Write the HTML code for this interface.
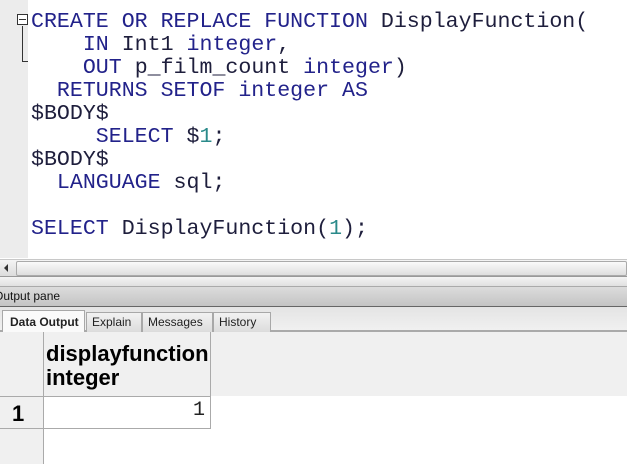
<!DOCTYPE html>
<html><head><style>
*{margin:0;padding:0;box-sizing:border-box}
body{width:627px;height:464px;overflow:hidden;background:#fff;position:relative;font-family:"Liberation Sans",sans-serif}
.gut{position:absolute;left:0;top:0;width:28px;height:258px;background:#ececec}
.code{position:absolute;left:31px;top:11px;font-family:"Liberation Mono",monospace;font-size:21.6px;line-height:23px;white-space:pre;color:#1e1e3c}
.k{color:#22228a}.n{color:#2a8a8a}
.fold{position:absolute;left:17px;top:14px;width:11px;height:11px;border:1px solid #333;background:#fff}
.fold:after{content:"";position:absolute;left:1px;top:4px;width:7px;height:1px;background:#333}
.fl{position:absolute;left:22px;top:26px;width:1px;height:36px;background:#333}
.fl2{position:absolute;left:22px;top:61px;width:6px;height:1px;background:#333}
.sb{position:absolute;left:0;top:259px;width:627px;height:18px;background:linear-gradient(#f4f4f4,#dcdcdc);border-top:1px solid #c8c8c8;border-bottom:1px solid #999}
.thumb{position:absolute;left:16px;top:1px;right:0;height:15px;border:1px solid #aaa;border-radius:2px;background:linear-gradient(#fafafa,#dedede)}
.arr{position:absolute;left:4px;top:4px;width:0;height:0;border-top:4px solid transparent;border-bottom:4px solid transparent;border-right:4px solid #333}
.sep{position:absolute;left:0;top:277px;width:627px;height:10px;background:linear-gradient(#f4f4f4,#e0e0e0);border-bottom:1px solid #aaa}
.op{position:absolute;left:0;top:287px;width:627px;height:20px;background:linear-gradient(#dcdcdc,#c4c4c4);border-bottom:1px solid #666;font-size:12px;line-height:18px;text-indent:-6px;color:#111}
.ts{position:absolute;left:0;top:307px;width:627px;height:25px;background:linear-gradient(#e4e4e4,#f0f0f0);border-bottom:2px solid #aaa}
.tab{position:absolute;top:5px;height:20px;border:1px solid #a8a8a8;border-bottom:none;background:linear-gradient(#f2f2f2,#dcdcdc);font-size:12px;line-height:18px;padding-left:5px;color:#222}
.tab.a{background:#fafafa;font-weight:bold;top:3px;height:22px;line-height:22px;padding-left:7px}
.grid{position:absolute;left:0;top:332px;width:627px;height:64px;background:#f0f0f0}
.rh{position:absolute;left:0;top:332px;width:44px;height:132px;background:#f0f0f0;border-right:1px solid #aaa}
.ch{position:absolute;left:44px;top:332px;width:167px;height:65px;border-right:1px solid #aaa;border-bottom:1px solid #aaa;font-weight:bold;font-size:22px;line-height:24px;padding:10px 0 0 2px;color:#000;white-space:nowrap}
.rn{position:absolute;left:0;top:396px;width:44px;height:33px;border-top:1px solid #aaa;border-bottom:1px solid #aaa;font-weight:bold;font-size:22px;line-height:34px;padding-left:12px}
.cell{position:absolute;left:44px;top:397px;width:167px;height:32px;border-right:1px solid #aaa;border-bottom:1px solid #aaa;background:#fff;font-family:"Liberation Mono",monospace;font-size:20px;text-align:right;padding-right:5px;line-height:28px;color:#222}
</style></head><body>
<div class="gut"></div>
<div class="fold"></div><div class="fl"></div><div class="fl2"></div>
<div class="code"><span class="k">CREATE OR REPLACE FUNCTION</span> DisplayFunction(
    <span class="k">IN</span> Int1 <span class="k">integer</span>,
    <span class="k">OUT</span> p_film_count <span class="k">integer</span>)
  <span class="k">RETURNS SETOF integer AS</span>
$BODY$
     <span class="k">SELECT</span> $<span class="n">1</span>;
$BODY$
  <span class="k">LANGUAGE</span> sql;

<span class="k">SELECT</span> DisplayFunction(<span class="n">1</span>);</div>
<div class="sb"><div class="arr"></div><div class="thumb"></div></div>
<div class="sep"></div>
<div class="op">Output pane</div>
<div class="ts">
<div class="tab a" style="left:2px;width:83px">Data Output</div>
<div class="tab" style="left:86px;width:56px">Explain</div>
<div class="tab" style="left:142px;width:71px">Messages</div>
<div class="tab" style="left:213px;width:58px">History</div>
</div>
<div class="grid"></div>
<div class="rh"></div>
<div class="ch">displayfunction<br>integer</div>
<div class="rn">1</div>
<div class="cell">1</div>
</body></html>
